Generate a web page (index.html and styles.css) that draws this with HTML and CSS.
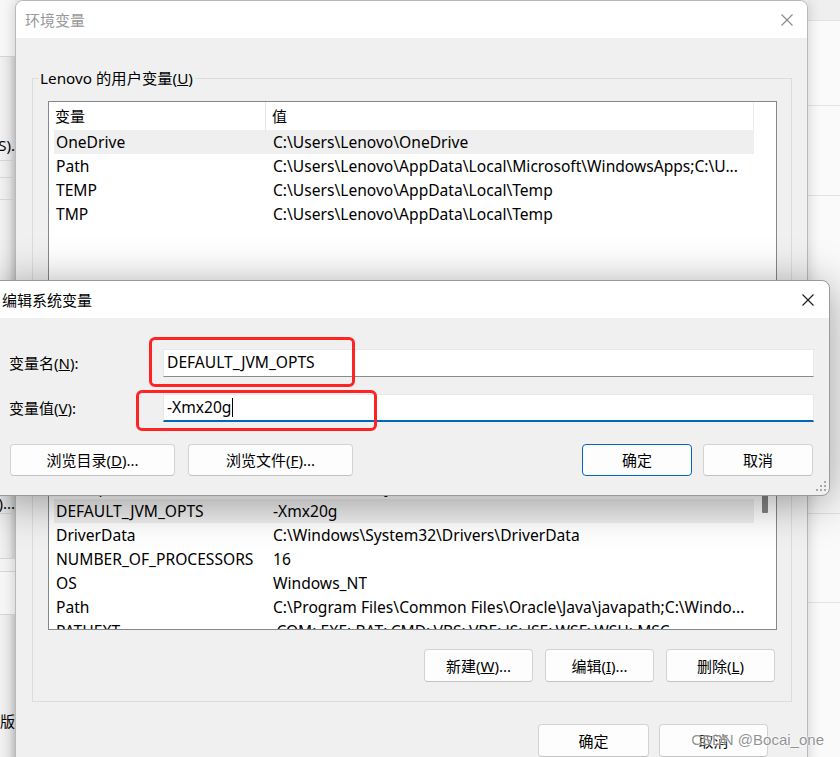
FILE: index.html
```html
<!DOCTYPE html>
<html lang="zh-CN">
<head>
<meta charset="utf-8">
<title>环境变量</title>
<link rel="stylesheet" href="styles.css">
</head>
<body>
<div class="desk">
  <div class="bg-left">
    <div class="bl s1"></div>
    <div class="bl s2"><span class="clip">(S).</span></div>
    <div class="bl s3"></div>
    <div class="bl s4"></div>
    <div class="bl s5"></div>
    <div class="bl s6"><span class="clip">(D)...</span></div>
    <div class="bl s7"></div>
    <div class="bl s8"></div>
    <div class="bl s9"></div>
    <div class="bl s10"><span class="clip bar">|</span><span class="clip ver">系统版</span></div>
  </div>
  <div class="bg-mid"></div>
  <div class="bg-right">
    <div class="br r1"></div>
    <div class="br r2"></div>
    <div class="br r3"></div>
    <div class="br r4"></div>
    <div class="br r5"></div>
    <div class="br r6"></div>
  </div>

  <div class="env">
    <div class="titlebar">
      <span class="title inactive">环境变量</span>
      <svg class="closex" width="12" height="12" viewBox="0 0 12 12"><path d="M0.5 0.5 L11.5 11.5 M11.5 0.5 L0.5 11.5" stroke="#8a8a8a" stroke-width="1.1" fill="none"/></svg>
    </div>
    <div class="env-body">
      <fieldset class="group g1">
        <legend>Lenovo 的用户变量(<u>U</u>)</legend>
        <div class="list l1">
          <div class="list-main">
            <div class="lhead"><div class="h1">变量</div><div class="h2">值</div></div>
            <div class="row sel"><div class="c1">OneDrive</div><div class="c2">C:\Users\Lenovo\OneDrive</div></div>
            <div class="row"><div class="c1">Path</div><div class="c2">C:\Users\Lenovo\AppData\Local\Microsoft\WindowsApps;C:\U...</div></div>
            <div class="row"><div class="c1">TEMP</div><div class="c2">C:\Users\Lenovo\AppData\Local\Temp</div></div>
            <div class="row"><div class="c1">TMP</div><div class="c2">C:\Users\Lenovo\AppData\Local\Temp</div></div>
          </div>
          <div class="vscroll"></div>
        </div>
        <div class="btnrow">
          <button class="btn">新建(N)...</button>
          <button class="btn">编辑(E)...</button>
          <button class="btn">删除(D)</button>
        </div>
      </fieldset>

      <fieldset class="group g2">
        <legend>系统变量(<u>S</u>)</legend>
        <div class="list l2">
          <div class="list-main">
            <div class="lhead"><div class="h1">变量</div><div class="h2">值</div></div>
            <div class="row"><div class="c1">CLASSPATH</div><div class="c2">.;C:\Program Files\Java\jdk1.8.0\lib</div></div>
            <div class="row"><div class="c1">ComSpec</div><div class="c2">C:\WINDOWS\system32\cmd.exe</div></div>
            <div class="row sel"><div class="c1">DEFAULT_JVM_OPTS</div><div class="c2">-Xmx20g</div></div>
            <div class="row"><div class="c1">DriverData</div><div class="c2">C:\Windows\System32\Drivers\DriverData</div></div>
            <div class="row"><div class="c1">NUMBER_OF_PROCESSORS</div><div class="c2">16</div></div>
            <div class="row"><div class="c1">OS</div><div class="c2">Windows_NT</div></div>
            <div class="row"><div class="c1">Path</div><div class="c2">C:\Program Files\Common Files\Oracle\Java\javapath;C:\Windo...</div></div>
            <div class="row"><div class="c1">PATHEXT</div><div class="c2">.COM;.EXE;.BAT;.CMD;.VBS;.VBE;.JS;.JSE;.WSF;.WSH;.MSC</div></div>
          </div>
          <div class="vscroll"><div class="thumb"></div></div>
        </div>
        <div class="btnrow">
          <button class="btn">新建(<u>W</u>)...</button>
          <button class="btn">编辑(<u>I</u>)...</button>
          <button class="btn">删除(<u>L</u>)</button>
        </div>
      </fieldset>

      <div class="dlgbtns">
        <button class="btn wide">确定</button>
        <button class="btn">取消</button>
      </div>
    </div>
  </div>

  <div class="edit">
    <div class="titlebar">
      <span class="title">编辑系统变量</span>
      <svg class="closex" width="12" height="12" viewBox="0 0 12 12"><path d="M0.5 0.5 L11.5 11.5 M11.5 0.5 L0.5 11.5" stroke="#1a1a1a" stroke-width="1.1" fill="none"/></svg>
    </div>
    <div class="edit-body">
      <div class="form">
        <label class="lbl">变量名(<u>N</u>):</label>
        <div class="input">DEFAULT_JVM_OPTS</div>
        <label class="lbl">变量值(<u>V</u>):</label>
        <div class="input focus">-Xmx20g<span class="caret"></span></div>
      </div>
      <div class="edit-btns">
        <div class="left">
          <button class="btn big">浏览目录(<u>D</u>)...</button>
          <button class="btn big">浏览文件(<u>F</u>)...</button>
        </div>
        <div class="right">
          <button class="btn def">确定</button>
          <button class="btn">取消</button>
        </div>
      </div>
    </div>
    <svg class="grip" width="13" height="12" viewBox="0 0 13 12">
      <rect x="10" y="0" width="2" height="2" fill="#a8a8a8"/>
      <rect x="6" y="4" width="2" height="2" fill="#a8a8a8"/>
      <rect x="10" y="4" width="2" height="2" fill="#a8a8a8"/>
      <rect x="2" y="8" width="2" height="2" fill="#a8a8a8"/>
      <rect x="6" y="8" width="2" height="2" fill="#a8a8a8"/>
      <rect x="10" y="8" width="2" height="2" fill="#a8a8a8"/>
    </svg>
  </div>

  <div class="mark mark1"></div>
  <div class="mark mark2"></div>
  <div class="watermark">CSDN @Bocai_one</div>
</div>
</body>
</html>
```

FILE: styles.css
```css
* { box-sizing: border-box; }
html, body { margin: 0; padding: 0; }
body {
  width: 840px;
  height: 757px;
  overflow: hidden;
  font-family: "Noto Sans", "Noto Sans CJK SC", sans-serif;
  font-size: 15px;
  color: #000;
  background: #f3f3f3;
}
.desk {
  position: relative;
  width: 840px;
  height: 757px;
  display: flex;
  overflow: hidden;
}

/* background windows */
.bg-left {
  width: 15px;
  display: flex;
  flex-direction: column;
  background: linear-gradient(90deg, #f1f1f1 0%, #e9e9e9 60%, #d4d4d4 100%);
}
.bl { border-bottom: 1px solid #d6d6d6; position: relative; overflow: hidden; }
.s1 { height: 57px; background: #f7f7f7; }
.s2 { height: 104px; display: flex; align-items: flex-end; justify-content: flex-end; padding-bottom: 5px; }
.s3 { height: 17px; }
.s4 { height: 22px; }
.s5 { height: 295px; border-bottom: 0; }
.s6 { height: 19px; display: flex; align-items: flex-end; justify-content: flex-end; }
.s7 { height: 45px; }
.s8 { height: 13px; background: #f3f3f3; }
.s9 { height: 43px; background: #f6f6f6; }
.s10 { flex: 1; border-bottom: 0; display: flex; flex-direction: column; align-items: flex-end; padding-top: 66px; }
.clip { white-space: nowrap; line-height: 20px; font-size: 15px; }
.bar { color: #777; font-size: 13px; line-height: 16px; margin-right: 13px; }
.ver { margin-top: 14px; }
.bg-mid { flex: 1; }
.bg-right {
  width: 32px;
  display: flex;
  flex-direction: column;
  background: #fafafa;
}
.br { border-bottom: 1px solid #e3e3e3; }
.r1 { height: 21px; background: #efefef; }
.r2 { height: 85px; }
.r3 { height: 90px; }
.r4 { height: 318px; }
.r5 { height: 89px; }
.r6 { flex: 1; border-bottom: 0; }

/* main dialog */
.env {
  position: absolute;
  left: 15px;
  top: 0;
  width: 793px;
  height: 800px;
  border: 1px solid #b9b9b9;
  border-radius: 8px 8px 0 0;
  background: #f0f0f0;
  box-shadow: 0 0 14px rgba(0, 0, 0, 0.18);
  overflow: hidden;
}
.titlebar {
  height: 37px;
  background: #fff;
  display: flex;
  align-items: center;
  justify-content: space-between;
}
.env .titlebar { padding: 0 14px 0 9px; }
.title { font-size: 15px; line-height: 20px; }
.title.inactive { color: #9a9a9a; }
.env-body {
  padding: 29px 15px 0 16px;
  display: flex;
  flex-direction: column;
}
.group {
  margin: 0;
  border: 1px solid #dcdcdc;
  padding: 0 14px 19px 15px;
  min-width: 0;
}
.group legend {
  padding: 0 2px;
  margin-left: -10px;
  font-size: 15.3px;
  line-height: 22px;
}
.g2 { margin-top: 26px; }
.list {
  margin-top: 12px;
  border: 1px solid #828790;
  background: #fff;
  display: flex;
  overflow: hidden;
}
.l1 { height: 190px; }
.l2 { height: 208px; }
.list-main { flex: 1; display: flex; flex-direction: column; min-width: 0; }
.lhead {
  height: 28px;
  display: flex;
  align-items: center;
  border-right: 1px solid #ececec;
  flex-shrink: 0;
}
.h1 { width: 217px; padding-left: 6px; border-right: 1px solid #e5e5e5; line-height: 28px; }
.h2 { padding-left: 6px; line-height: 28px; }
.row {
  height: 24px;
  flex-shrink: 0;
  margin-left: 5px;
  display: flex;
  align-items: center;
  white-space: nowrap;
  line-height: 22px;
  font-size: 15.6px;
  padding-bottom: 1px;
}
.row.sel { background: #efefef; }
.c1 { width: 219px; padding-left: 2px; flex-shrink: 0; }
.c2 { overflow: hidden; }
.vscroll { width: 22px; flex-shrink: 0; position: relative; }
.thumb {
  width: 6px;
  height: 54px;
  margin: 36px 0 0 8px;
  background: #858585;
  border-radius: 1px;
}
.btnrow {
  margin-top: 18px;
  margin-right: 2px;
  display: flex;
  justify-content: flex-end;
  gap: 12px;
}
.g2 .btnrow { margin-top: 19px; }
.btn {
  font-family: inherit;
  font-size: 15px;
  color: #000;
  width: 109px;
  height: 33px;
  background: #fdfdfd;
  border: 1px solid #d3d3d3;
  border-bottom-color: #c2c2c2;
  border-radius: 4px;
  padding: 0;
  line-height: 20px;
}
.dlgbtns {
  margin-top: 22px;
  margin-right: 24px;
  display: flex;
  justify-content: flex-end;
  gap: 10px;
}
.btn.wide { width: 111px; }

/* front dialog */
.edit {
  position: absolute;
  left: -2px;
  top: 280px;
  width: 832px;
  height: 216px;
  border: 1px solid #9a9a9a;
  border-radius: 0 8px 8px 0;
  background: #f0f0f0;
  box-shadow: 0 6px 44px rgba(0, 0, 0, 0.38);
  overflow: hidden;
}
.edit .titlebar { padding: 0 15px 0 3px; border-radius: 0 8px 0 0; }
.edit-body { padding: 31px 15px 19px 10px; }
.form {
  display: grid;
  grid-template-columns: 154px 1fr;
  row-gap: 17px;
  align-items: center;
}
.lbl { line-height: 28px; }
.input {
  height: 28px;
  background: #fff;
  border: 1px solid #e8e8e8;
  border-bottom: 1px solid #8a8a8a;
  padding: 0 0 2px 3px;
  font-size: 15.6px;
  line-height: 24px;
  display: flex;
  align-items: center;
  white-space: nowrap;
}
.input.focus { border-bottom: 2px solid #0067c0; padding-bottom: 1px; }
.caret { display: inline-block; width: 1px; height: 19px; background: #000; margin-left: 1px; }
.edit-btns {
  margin-top: 22px;
  display: flex;
  justify-content: space-between;
}
.edit-btns .left { display: flex; gap: 13px; margin-left: 1px; }
.edit-btns .right { display: flex; gap: 11px; margin-right: 1px; }
.edit-btns .btn { height: 32px; width: 110px; }
.edit-btns .btn.big { width: 165px; }
.btn.def { border: 1px solid #0067c0; }
.grip { position: absolute; right: 2px; bottom: 2px; }

/* annotations */
.mark {
  position: absolute;
  border: 3px solid #ff2424;
  border-radius: 6px;
}
.mark1 { left: 149px; top: 337px; width: 206px; height: 50px; }
.mark2 { left: 136px; top: 390px; width: 241px; height: 41px; }
.watermark {
  position: absolute;
  right: 16px;
  top: 730px;
  font-family: "Liberation Sans", Arial, sans-serif;
  font-size: 15px;
  line-height: 20px;
  color: rgba(110, 110, 110, 0.75);
  text-shadow: 0 0 2px #fff, 0 0 2px #fff;
  white-space: nowrap;
}
```
